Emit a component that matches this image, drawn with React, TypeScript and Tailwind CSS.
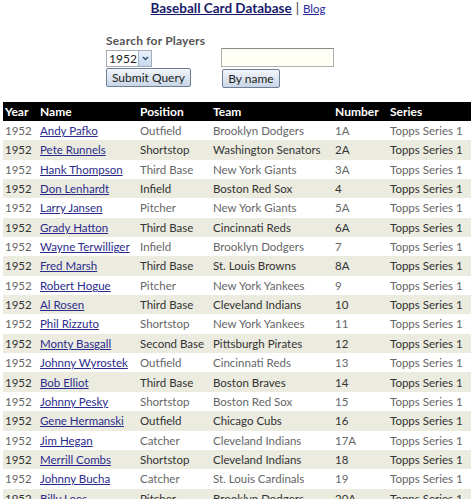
import React from "react";

const rows: [string, string, string, string][] = [
  ["Andy Pafko", "Outfield", "Brooklyn Dodgers", "1A"],
  ["Pete Runnels", "Shortstop", "Washington Senators", "2A"],
  ["Hank Thompson", "Third Base", "New York Giants", "3A"],
  ["Don Lenhardt", "Infield", "Boston Red Sox", "4"],
  ["Larry Jansen", "Pitcher", "New York Giants", "5A"],
  ["Grady Hatton", "Third Base", "Cincinnati Reds", "6A"],
  ["Wayne Terwilliger", "Infield", "Brooklyn Dodgers", "7"],
  ["Fred Marsh", "Third Base", "St. Louis Browns", "8A"],
  ["Robert Hogue", "Pitcher", "New York Yankees", "9"],
  ["Al Rosen", "Third Base", "Cleveland Indians", "10"],
  ["Phil Rizzuto", "Shortstop", "New York Yankees", "11"],
  ["Monty Basgall", "Second Base", "Pittsburgh Pirates", "12"],
  ["Johnny Wyrostek", "Outfield", "Cincinnati Reds", "13"],
  ["Bob Elliot", "Third Base", "Boston Braves", "14"],
  ["Johnny Pesky", "Shortstop", "Boston Red Sox", "15"],
  ["Gene Hermanski", "Outfield", "Chicago Cubs", "16"],
  ["Jim Hegan", "Catcher", "Cleveland Indians", "17A"],
  ["Merrill Combs", "Shortstop", "Cleveland Indians", "18"],
  ["Johnny Bucha", "Catcher", "St. Louis Cardinals", "19"],
  ["Billy Loes", "Pitcher", "Brooklyn Dodgers", "20A"],
];

const cols = "grid grid-cols-[37px_100px_73px_122px_55px_1fr]";

export default function App() {
  return (
    <div className="w-[474px] h-[499px] overflow-hidden bg-white text-[11.5px] text-[#555]" style={{ fontFamily: 'Lato, "Open Sans", sans-serif' }}>
      <div className="flex justify-center items-baseline gap-[4px] h-[20px] ml-[2px] leading-[17px]">
        <a href="#" className="font-bold text-[13.5px] text-[#1a1a6a] underline">Baseball Card Database</a>
        <span className="text-[#333] text-[13px]">|</span>
        <a href="#" className="text-[11.5px] text-[#2a2aa0] underline">Blog</a>
      </div>
      <div className="pl-[106px] pt-[12px] flex flex-col">
        <div className="font-bold text-[12px] text-[#555] leading-[17px] tracking-[0.2px]">Search for Players</div>
        <div className="flex gap-[30px] items-start">
          <div className="flex flex-col gap-[1px] pt-[1px]">
            <div className="flex items-center w-[46px] h-[17px] border border-[#a5acb5] bg-white">
              <span className="pl-[2px] text-[12px] text-[#222] flex-1 leading-none">1952</span>
              <div className="w-[13px] h-[15px] bg-gradient-to-b from-[#e8f1fb] to-[#c4d8ee] border-l border-[#9eb3cc] flex items-center justify-center">
                <svg width="7" height="5" viewBox="0 0 7 5"><path d="M1 1 L3.5 3.5 L6 1" stroke="#3a4f6b" strokeWidth="1.5" fill="none" /></svg>
              </div>
            </div>
            <button className="w-[85px] h-[19px] border border-[#6d7f96] rounded-[2px] bg-gradient-to-b from-[#f2f5fa] to-[#c9d6e6] text-[12px] text-[#222] leading-none">Submit Query</button>
          </div>
          <div className="flex flex-col gap-[2px] -mt-[1px]">
            <div className="w-[113px] h-[19px] border border-[#b0b0b0] border-t-[#8a8a8a] bg-[#fffff6]" />
            <button className="w-[58px] h-[19px] ml-[1px] border border-[#6d7f96] rounded-[2px] bg-gradient-to-b from-[#f2f5fa] to-[#c9d6e6] text-[12px] text-[#222] leading-none">By name</button>
          </div>
        </div>
      </div>
      <div className="mx-[3px] mt-[14px] w-[468px]">
        <div className={`${cols} bg-black text-white font-bold text-[12px] h-[19px] items-center`}>
          <div className="pl-[2px]">Year</div>
          <div>Name</div>
          <div>Position</div>
          <div>Team</div>
          <div>Number</div>
          <div>Series</div>
        </div>
        {rows.map((r, i) => (
          <div
            key={i}
            className={`${cols} h-[19.35px] items-center ${i % 2 === 1 ? "bg-[#ebebe0] text-[#333]" : "bg-white text-[#666]"}`}
          >
            <div className="pl-[2px]">1952</div>
            <div>
              <a href="#" className="text-[#2b2b8c] underline">{r[0]}</a>
            </div>
            <div>{r[1]}</div>
            <div>{r[2]}</div>
            <div>{r[3]}</div>
            <div>Topps Series 1</div>
          </div>
        ))}
      </div>
    </div>
  );
}
